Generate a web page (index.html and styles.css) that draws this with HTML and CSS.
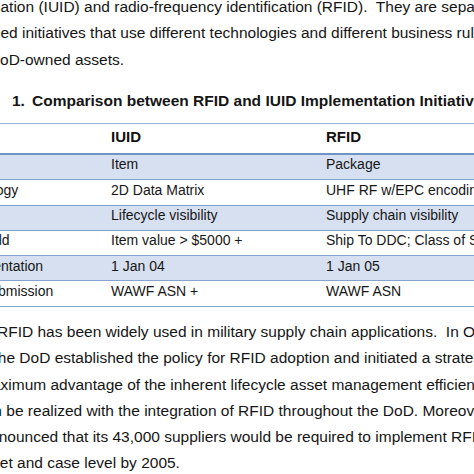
FILE: index.html
```html
<!DOCTYPE html>
<html lang="en">
<head>
<meta charset="utf-8">
<title>Comparison between RFID and IUID Implementation Initiatives</title>
<link rel="stylesheet" href="styles.css">
</head>
<body>
<div class="page">
  <div class="para para-top">
    <div class="line l-a">ation (IUID) and radio-frequency identification (RFID).  They are separate but</div>
    <div class="line l-b">ed initiatives that use different technologies and different business rules for</div>
    <div class="line l-c">DoD-owned assets.</div>
  </div>

  <div class="caption"><span class="num">1.</span>Comparison between RFID and IUID Implementation Initiatives</div>

  <table class="cmp">
    <thead>
      <tr>
        <th></th>
        <th>IUID</th>
        <th>RFID</th>
      </tr>
    </thead>
    <tbody>
      <tr class="shade"><td>Level</td><td>Item</td><td>Package</td></tr>
      <tr><td>Technology</td><td>2D Data Matrix</td><td>UHF RF w/EPC encoding</td></tr>
      <tr class="shade"><td>Goal</td><td>Lifecycle visibility</td><td>Supply chain visibility</td></tr>
      <tr><td>Threshold</td><td>Item value &gt; $5000 +</td><td>Ship To DDC; Class of Supply</td></tr>
      <tr class="shade"><td>Implementation</td><td>1 Jan 04</td><td>1 Jan 05</td></tr>
      <tr><td>Data Submission</td><td>WAWF ASN +</td><td>WAWF ASN</td></tr>
    </tbody>
  </table>

  <div class="para para-bottom">
    <div class="line l-d">RFID has been widely used in military supply chain applications.  In October</div>
    <div class="line l-e">the DoD established the policy for RFID adoption and initiated a strategy to take</div>
    <div class="line l-f">maximum advantage of the inherent lifecycle asset management efficiencies that</div>
    <div class="line l-g">can be realized with the integration of RFID throughout the DoD. Moreover, DoD</div>
    <div class="line l-h">announced that its 43,000 suppliers would be required to implement RFID at the</div>
    <div class="line l-i">pallet and case level by 2005.</div>
  </div>
</div>
</body>
</html>
```

FILE: styles.css
```css
html, body {
  margin: 0;
  padding: 0;
  background: #ffffff;
  overflow: hidden;
}

.page {
  width: 474px;
  height: 474px;
  overflow: hidden;
  font-family: "Liberation Sans", Arial, Helvetica, sans-serif;
  color: #151515;
}

.para {
  font-size: 15.5px;
  line-height: 26.2px;
}

.para-top {
  margin-top: -5.9px;
}

.line {
  white-space: pre;
}

.l-a { text-indent: 0.5px; }
.l-b { text-indent: 0.5px; }
.l-c { text-indent: -11.2px; }

.l-d { text-indent: -3px; }
.l-e { text-indent: -6.5px; }
.l-f { text-indent: -21px; }
.l-g { text-indent: -23px; }
.l-h { text-indent: -18.5px; }
.l-i { text-indent: -24.3px; }

.caption {
  margin-top: 15.3px;
  font-size: 15.5px;
  font-weight: bold;
  line-height: 26.2px;
  white-space: pre;
  padding-left: 12px;
}

.num {
  display: inline-block;
  width: 20px;
}

.cmp {
  margin-top: 8.7px;
  margin-left: -55px;
  width: 620px;
  table-layout: fixed;
  border-collapse: separate;
  border-spacing: 0;
  border-top: 1px solid #9fb5d6;
  font-size: 14px;
}

.cmp th:nth-child(1), .cmp td:nth-child(1) { width: 160px; }
.cmp th:nth-child(2), .cmp td:nth-child(2) { width: 215px; }
.cmp th:nth-child(3), .cmp td:nth-child(3) { width: 245px; }

.cmp th {
  box-sizing: border-box;
  height: 31px;
  padding: 4px 0 0 6px;
  text-align: left;
  vertical-align: top;
  font-size: 15px;
  font-weight: bold;
  line-height: 17px;
  color: #111111;
  border-bottom: 2px solid #6f93c3;
  white-space: nowrap;
  overflow: hidden;
}

.cmp td {
  box-sizing: border-box;
  height: 25.3px;
  padding: 1.5px 0 0 6px;
  text-align: left;
  vertical-align: top;
  line-height: 16px;
  color: #161616;
  border-bottom: 1px solid #86a4cb;
  white-space: nowrap;
  overflow: hidden;
}

.cmp td:first-child {
  padding-left: 2.4px;
}

.cmp tr.shade td {
  background: #d6e0f0;
}

.para-bottom {
  margin-top: 12.6px;
}
```
